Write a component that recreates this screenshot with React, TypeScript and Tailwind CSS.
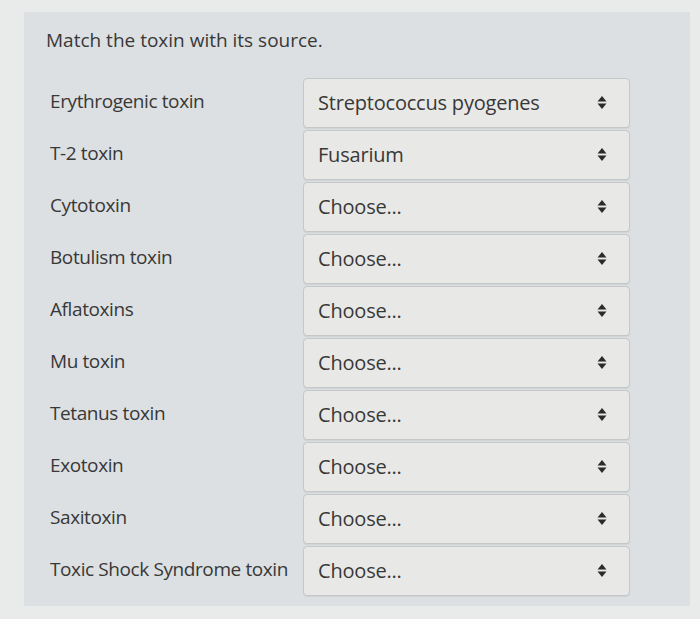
import { useState } from 'react'

const ROWS: { toxin: string; source: string }[] = [
  { toxin: 'Erythrogenic toxin', source: 'Streptococcus pyogenes' },
  { toxin: 'T-2 toxin', source: 'Fusarium' },
  { toxin: 'Cytotoxin', source: '' },
  { toxin: 'Botulism toxin', source: '' },
  { toxin: 'Aflatoxins', source: '' },
  { toxin: 'Mu toxin', source: '' },
  { toxin: 'Tetanus toxin', source: '' },
  { toxin: 'Exotoxin', source: '' },
  { toxin: 'Saxitoxin', source: '' },
  { toxin: 'Toxic Shock Syndrome toxin', source: '' },
]

const SOURCES = [
  'Streptococcus pyogenes',
  'Fusarium',
  'Clostridium botulinum',
  'Clostridium tetani',
  'Aspergillus flavus',
  'Staphylococcus aureus',
  'Conus geographus',
  'Alexandrium',
  'Pseudomonas aeruginosa',
  'Helicobacter pylori',
]

// up/down caret drawn like a native select indicator
function Caret() {
  return (
    <svg width="10" height="15" viewBox="0 0 10 15" className="shrink-0">
      <path d="M5 1 L9.5 6.5 H0.5 Z" fill="#2a2a2a" />
      <path d="M5 14 L9.5 8.5 H0.5 Z" fill="#2a2a2a" />
    </svg>
  )
}

export default function App() {
  const [answers, setAnswers] = useState<string[]>(ROWS.map((r) => r.source))

  return (
    <div className="w-[700px] h-[619px] bg-[#e9ebea] pt-[12px] pl-[24px] font-['Open_Sans',sans-serif] text-[#383838]">
      <div className="w-[666px] h-[594px] bg-[#dce0e2] pt-[14px] pl-[22px]">
        <p className="text-[19px] mb-[23px]">Match the toxin with its source.</p>

        <div className="flex flex-col gap-[2px]">
          {ROWS.map((row, i) => (
            <div key={row.toxin} className="flex items-center">
              <div className="w-[257px] pl-[4px] pb-[2px] text-[19px] tracking-[-0.4px] whitespace-nowrap">
                {row.toxin}
              </div>
              <label className="relative w-[327px] h-[50px] flex items-center justify-between pl-[14px] pr-[22px] bg-[#e8e9e6] border border-[#c5c8c9] rounded-[4px] shadow-[0_1px_1px_rgba(0,0,0,0.06)]">
                <span className="text-[20px] tracking-[-0.2px]">{answers[i] || 'Choose...'}</span>
                <Caret />
                <select
                  className="absolute inset-0 opacity-0 cursor-pointer"
                  value={answers[i]}
                  onChange={(e) => {
                    const next = [...answers]
                    next[i] = e.target.value
                    setAnswers(next)
                  }}
                >
                  <option value="">Choose...</option>
                  {SOURCES.map((s) => (
                    <option key={s} value={s}>
                      {s}
                    </option>
                  ))}
                </select>
              </label>
            </div>
          ))}
        </div>
      </div>
    </div>
  )
}
